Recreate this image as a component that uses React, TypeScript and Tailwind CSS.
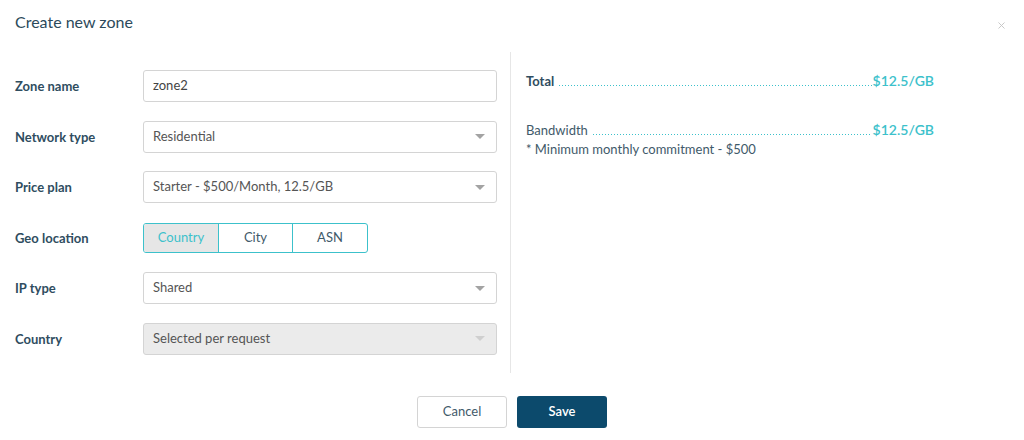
import { X } from 'lucide-react';

const Caret = ({ faded = false }: { faded?: boolean }) => (
  <span
    className={`w-0 h-0 border-l-[5px] border-r-[5px] border-t-[5px] border-l-transparent border-r-transparent ${
      faded ? 'border-t-[#cfcfcf]' : 'border-t-[#a3a3a3]'
    }`}
  />
);

const Row = ({ label, children }: { label: string; children: React.ReactNode }) => (
  <div className="flex items-center h-[32px]">
    <label className="w-[128px] text-[13px] font-bold text-[#2f4d5f] translate-y-[1px]">{label}</label>
    <div className="w-[354px] h-full flex items-center">{children}</div>
  </div>
);

const Select = ({ value, disabled = false }: { value: string; disabled?: boolean }) => (
  <div
    className={`w-full h-full flex items-center justify-between pl-[9px] pr-[11px] rounded-[3px] border border-[#d4d4d4] text-[13px] text-[#555] ${
      disabled ? 'bg-[#ebebeb]' : 'bg-white'
    }`}
  >
    <span>{value}</span>
    <Caret faded={disabled} />
  </div>
);

const PriceLine = ({ label, value, bold = false }: { label: string; value: string; bold?: boolean }) => (
  <div className="flex items-baseline w-[408px] text-[13px]">
    <span className={bold ? 'font-bold text-[#2f4d5f]' : 'text-[#3f5a6a]'}>{label}</span>
    <span className="flex-1 ml-[5px] mr-[1px] h-[1px] bg-[linear-gradient(to_right,#3cc1cb_1px,transparent_1px)] bg-[length:3px_1px] bg-repeat-x" />
    <span className="text-[#3cc1cb] font-semibold text-[14px]">{value}</span>
  </div>
);

export default function App() {
  return (
    <div className="w-[1024px] h-[440px] bg-white font-['Lato','Open_Sans',sans-serif] relative">
      <div className="h-[52px] pl-[15px] pt-[11px]">
        <h2 className="text-[16px] text-[#2c4a5b] leading-[22px]">Create new zone</h2>
      </div>
      <button className="absolute right-[17px] top-[20px] text-[#c4c4c4]">
        <X className="w-[11px] h-[11px]" strokeWidth={2} />
      </button>

      <div className="flex">
        <div className="w-[511px] pl-[15px] pt-[18px] pb-[18px] border-r border-[#e6e6e6] flex flex-col gap-[18.5px]">
          <Row label="Zone name">
            <div className="w-full h-full flex items-center pl-[9px] rounded-[3px] border border-[#d4d4d4] text-[13px] text-[#444]">
              zone2
            </div>
          </Row>
          <Row label="Network type">
            <Select value="Residential" />
          </Row>
          <Row label="Price plan">
            <Select value="Starter - $500/Month, 12.5/GB" />
          </Row>
          <Row label="Geo location">
            <div className="flex h-[30px] rounded-[3px] border border-[#3cc1cb] overflow-hidden text-[13px]">
              <div className="w-[75px] flex items-center justify-center bg-[#e6e6e6] text-[#3cc1cb] border-r border-[#3cc1cb]">
                Country
              </div>
              <div className="w-[74px] flex items-center justify-center text-[#3f5a6a] border-r border-[#3cc1cb]">
                City
              </div>
              <div className="w-[74px] flex items-center justify-center text-[#3f5a6a]">ASN</div>
            </div>
          </Row>
          <Row label="IP type">
            <Select value="Shared" />
          </Row>
          <Row label="Country">
            <Select value="Selected per request" disabled />
          </Row>
        </div>

        <div className="flex-1 pl-[15px] pt-[18px]">
          <PriceLine label="Total" value="$12.5/GB" bold />
          <div className="mt-[27px]">
            <PriceLine label="Bandwidth" value="$12.5/GB" />
            <p className="text-[13px] text-[#3f5a6a] leading-[18px]">* Minimum monthly commitment - $500</p>
          </div>
        </div>
      </div>

      <div className="flex justify-center gap-[10px] mt-[23px]">
        <button className="w-[90px] h-[32px] rounded-[3px] border border-[#d4d4d4] bg-white text-[13px] text-[#3f5a6a]">
          Cancel
        </button>
        <button className="w-[90px] h-[32px] rounded-[3px] bg-[#0c4a6c] text-[13px] font-semibold text-white">
          Save
        </button>
      </div>
    </div>
  );
}
